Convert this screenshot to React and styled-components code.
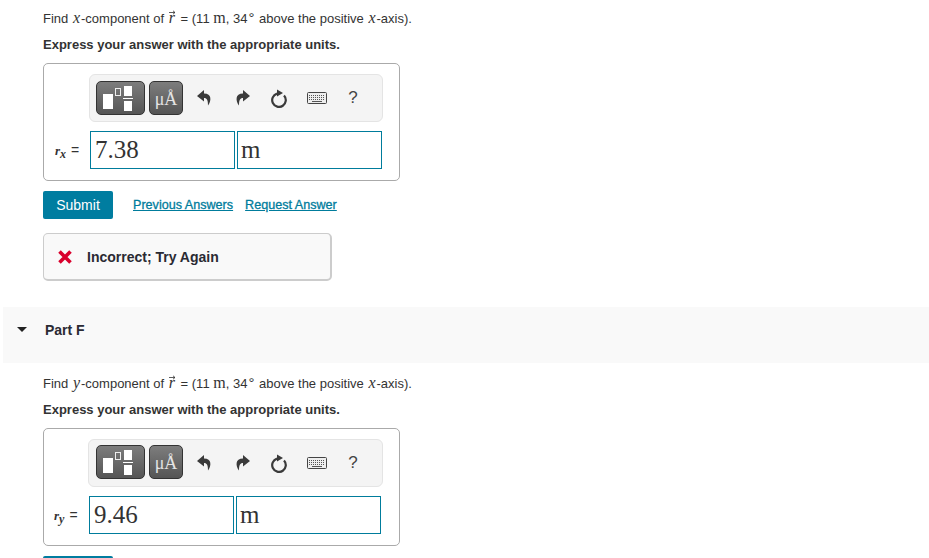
import styled, { createGlobalStyle } from "styled-components";

const GlobalStyle = createGlobalStyle`
  html, body {
    margin: 0;
    background: #fff;
  }
  #root {
    height: 558px;
    overflow: hidden;
  }
`;

const Page = styled.div`
  font-family: "Liberation Sans", Arial, sans-serif;
  font-size: 13px;
  color: #333;
  width: 929px;
  padding-top: 9px;
`;

const Content = styled.div`
  padding-left: 43px;
`;

const Prompt = styled.p`
  margin: ${(p) => p.$top}px 0 0;
  line-height: 20px;
  height: 20px;
  white-space: nowrap;
`;

const Instruction = styled.p`
  margin: 6px 0 0;
  line-height: 20px;
  font-weight: bold;
  height: 20px;
`;

const MathVar = styled.i`
  font-family: "Liberation Serif", serif;
  font-size: 16px;
  line-height: 0;
  margin: 0 1px;
`;

const MathUnit = styled.span`
  font-family: "Liberation Serif", serif;
  font-size: 16px;
  line-height: 0;
`;

const Degree = styled.span`
  margin: 0 1px 0 1px;
  font-size: 15px;
  line-height: 0;
`;

const VectorVar = styled.span`
  position: relative;
  font-family: "Liberation Serif", serif;
  font-style: italic;
  font-size: 16px;
  line-height: 0;
  margin: 0 2px 0 1px;
  svg {
    position: absolute;
    left: 0;
    top: 1px;
  }
`;

const AnswerBox = styled.div`
  box-sizing: border-box;
  width: 357px;
  height: 118px;
  margin-top: 8px;
  border: 1px solid #aaa;
  border-radius: 5px;
  padding: 10px 0 0 ${(p) => p.$indent}px;
`;

const Toolbar = styled.div`
  box-sizing: border-box;
  display: flex;
  align-items: center;
  height: 48px;
  width: ${(p) => p.$width}px;
  padding-left: ${(p) => p.$pad}px;
  background: #f4f4f4;
  border: 1px solid #e4e4e4;
  border-radius: 6px;
`;

const TemplateButton = styled.div`
  box-sizing: border-box;
  display: flex;
  align-items: center;
  justify-content: center;
  width: ${(p) => p.$width}px;
  height: 34px;
  margin-right: 4px;
  margin-bottom: ${(p) => (p.$raised ? 2 : 0)}px;
  background: linear-gradient(#7d7d7d, #555);
  border: 1px solid #333;
  border-radius: 5px;
  color: #e4e4e4;
  font-family: "Liberation Serif", serif;
  font-size: 18px;
  padding-top: 2px;
`;

const ToolIcon = styled.div`
  display: flex;
  align-items: center;
  justify-content: center;
  width: ${(p) => p.$width}px;
  margin-left: ${(p) => p.$left || 0}px;
  color: #444;
  font-size: 17px;
`;

const InputRow = styled.div`
  display: flex;
  align-items: center;
  margin-top: 9px;
  margin-left: -34px;
`;

const Label = styled.label`
  width: 35px;
  font-size: 14px;
  white-space: nowrap;
  i {
    font-family: "Liberation Serif", serif;
    font-weight: bold;
    font-size: 13px;
  }
  sub {
    font-family: "Liberation Serif", serif;
    font-size: 12px;
    font-weight: bold;
    font-style: italic;
    line-height: 0;
    margin-right: 5px;
  }
`;

const Field = styled.div`
  box-sizing: border-box;
  width: 145px;
  height: 38px;
  margin-right: 2px;
  border: 1px solid #007c9c;
  padding-left: ${(p) => p.$pad}px;
  font-family: "Liberation Serif", serif;
  font-size: 25px;
  line-height: 35px;
  color: #333;
`;

const Actions = styled.div`
  display: flex;
  align-items: center;
  margin-top: 10px;
`;

const SubmitButton = styled.button`
  width: 70px;
  height: 28px;
  padding: 0;
  border: none;
  border-radius: 2px;
  background: #007da0;
  color: #fff;
  font-family: inherit;
  font-size: 14px;
  flex: none;
`;

const ActionLink = styled.a`
  margin-left: ${(p) => p.$left}px;
  color: #007c9c;
  font-size: 12.6px;
  font-weight: 500;
  text-decoration: underline;
  -webkit-text-stroke: 0.3px #007c9c;
`;

const Feedback = styled.div`
  box-sizing: border-box;
  display: flex;
  align-items: center;
  width: 289px;
  height: 48px;
  margin-top: 14px;
  padding-left: 13px;
  background: #f9f9f9;
  border: 1px solid #ccc;
  border-bottom-width: 2px;
  border-right-width: 2px;
  border-radius: 5px;
  font-size: 14px;
  font-weight: bold;
  color: #2a2a33;
  svg {
    margin-right: 14px;
  }
`;

const PartHeader = styled.div`
  display: flex;
  box-sizing: border-box;
  height: 56px;
  margin: 26px 0 0 3px;
  padding: 15px 0 0 14px;
  background: #f9f9f9;
  font-size: 14px;
  font-weight: bold;
  color: #2a2a33;
  line-height: 16px;
`;

const Caret = styled.span`
  width: 0;
  height: 0;
  margin: 5px 18px 0 0;
  border-left: 5px solid transparent;
  border-right: 5px solid transparent;
  border-top: 5px solid #222;
`;

const TemplatesGlyph = () => (
  <svg width="47" height="32" viewBox="0 0 47 32">
    <rect x="6" y="11" width="10" height="15" fill="#fff" />
    <rect x="18.5" y="5.5" width="5" height="7" fill="none" stroke="#eee" />
    <rect x="27" y="3" width="8" height="10" fill="#fff" />
    <rect x="26" y="15" width="10" height="1" fill="#fff" />
    <rect x="27" y="18" width="8" height="10" fill="#fff" />
  </svg>
);

const UndoGlyph = ({ flip }) => (
  <svg width="15" height="16" viewBox="0 0 15 16" style={flip ? { transform: "scaleX(-1)" } : undefined}>
    <path d="M7 0 L0 6 L7 11.5 V8 C10 8 11 10 11 15.5 C14.5 11 15 3.5 7 3.5 Z" fill="#3a3a3a" />
  </svg>
);

const RefreshGlyph = () => (
  <svg width="18" height="19" viewBox="0 0 18 19">
    <path d="M7 4.6 A6.8 6.8 0 1 0 14 6.5" fill="none" stroke="#3a3a3a" strokeWidth="2.2" />
    <path d="M7 0.5 L13 4 L7 7.5 Z" fill="#3a3a3a" />
  </svg>
);

const KeyboardGlyph = () => (
  <svg width="20" height="12" viewBox="0 0 20 12">
    <rect x="0.5" y="0.5" width="19" height="11" rx="1" fill="#eee" stroke="#444" />
    <path d="M2 3.5h16M2 5.5h16M2 7.5h16" stroke="#555" strokeDasharray="1 1" />
    <path d="M5 9.5h10" stroke="#555" />
  </svg>
);

const VectorArrow = () => (
  <svg width="7" height="5" viewBox="0 0 7 5">
    <path d="M0 2.5h6M4 .8l2 1.7-2 1.7" fill="none" stroke="#333" strokeWidth=".8" />
  </svg>
);

const Vector = () => (
  <VectorVar>
    <VectorArrow />r
  </VectorVar>
);

const ProblemText = ({ axis, top }) => (
  <>
    <Prompt $top={top}>
      Find <MathVar>{axis}</MathVar>-component of <Vector /> = (11 <MathUnit>m</MathUnit>, 34<Degree>°</Degree> above
      the positive <MathVar>x</MathVar>-axis).
    </Prompt>
    <Instruction>Express your answer with the appropriate units.</Instruction>
  </>
);

const Answer = ({ axis, value, offset }) => (
  <AnswerBox $indent={offset ? 45 : 44}>
    <Toolbar $width={offset ? 294 : 295} $pad={offset ? 6 : 7}>
      <TemplateButton $width={49} $raised={!offset}>
        <TemplatesGlyph />
      </TemplateButton>
      <TemplateButton $width={34} $raised={!offset}>
        μÅ
      </TemplateButton>
      <ToolIcon $width={15} $left={10}>
        <UndoGlyph />
      </ToolIcon>
      <ToolIcon $width={15} $left={23}>
        <UndoGlyph flip />
      </ToolIcon>
      <ToolIcon $width={18} $left={20}>
        <RefreshGlyph />
      </ToolIcon>
      <ToolIcon $width={20} $left={19}>
        <KeyboardGlyph />
      </ToolIcon>
      <ToolIcon $width={10} $left={21}>
        ?
      </ToolIcon>
    </Toolbar>
    <InputRow>
      <Label>
        <i>r</i>
        <sub>{axis}</sub>=
      </Label>
      <Field $pad={4}>{value}</Field>
      <Field $pad={3}>m</Field>
    </InputRow>
  </AnswerBox>
);

const App = () => {
  return (
    <Page>
      <GlobalStyle />
      <Content>
        <ProblemText axis="x" top={0} />
        <Answer axis="x" value="7.38" offset />
        <Actions>
          <SubmitButton>Submit</SubmitButton>
          <ActionLink $left={20}>Previous Answers</ActionLink>
          <ActionLink $left={12}>Request Answer</ActionLink>
        </Actions>
        <Feedback>
          <svg width="16" height="16" viewBox="0 0 16 16">
            <path d="M2.5 2.5 L13.5 13.5 M13.5 2.5 L2.5 13.5" stroke="#d9002c" strokeWidth="3.6" />
          </svg>
          Incorrect; Try Again
        </Feedback>
      </Content>
      <PartHeader>
        <Caret />
        Part F
      </PartHeader>
      <Content>
        <ProblemText axis="y" top={11} />
        <Answer axis="y" value="9.46" />
        <Actions>
          <SubmitButton />
        </Actions>
      </Content>
    </Page>
  );
};

export default App;
